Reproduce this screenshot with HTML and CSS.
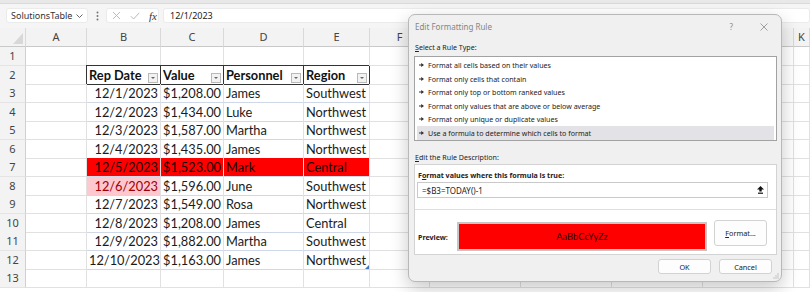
FILE: index.html
```html
<!DOCTYPE html>
<html lang="en">
<head>
  <meta charset="UTF-8">
  <title>Edit Formatting Rule</title>
  <link rel="stylesheet" href="styles.css">
</head>
<body>
  <div class="ribbon-edge"></div>

  <!-- name box + formula bar -->
  <div class="formula-bar">
    <div class="name-box">
      <span>SolutionsTable</span>
      <svg width="7" height="4" viewBox="0 0 7 4"><polyline points="0.5,0.5 3.5,3.5 6.5,0.5" fill="none" stroke="#555" stroke-width="0.9"/></svg>
    </div>
    <svg class="grip" width="3" height="10" viewBox="0 0 3 10"><circle cx="1.5" cy="1.5" r="1" fill="#777"/><circle cx="1.5" cy="5" r="1" fill="#777"/><circle cx="1.5" cy="8.5" r="1" fill="#777"/></svg>
    <div class="fx-box">
      <svg width="9" height="9" viewBox="0 0 9 9"><path d="M1 1L8 8M8 1L1 8" stroke="#b4b4b4" stroke-width="0.9"/></svg>
      <svg width="10" height="8" viewBox="0 0 10 8"><path d="M0.8 4.2L3.6 7L9.2 0.8" fill="none" stroke="#b4b4b4" stroke-width="0.9"/></svg>
      <span class="fx">fx</span>
    </div>
    <div class="formula-input"><span>12/1/2023</span></div>
  </div>

  <!-- worksheet -->
  <div class="sheet">
    <div class="row col-head">
      <div class="corner"></div><div>A</div><div>B</div><div>C</div><div>D</div><div>E</div><div>F</div><div>G</div><div>H</div><div>I</div><div>J</div><div>K</div>
    </div>
    <div class="row"><div class="rh">1</div><div></div><div></div><div></div><div></div><div></div><div></div><div></div><div></div><div></div><div></div><div></div></div>
    <div class="row"><div class="rh">2</div><div></div>
      <div class="th"><span>Rep Date</span><i class="filter"></i></div>
      <div class="th"><span>Value</span><i class="filter"></i></div>
      <div class="th"><span>Personnel</span><i class="filter"></i></div>
      <div class="th"><span>Region</span><i class="filter"></i></div>
      <div></div><div></div><div></div><div></div><div></div><div></div></div>
    <div class="row"><div class="rh">3</div><div></div><div class="td right">12/1/2023</div><div class="td right">$1,208.00</div><div class="td">James</div><div class="td">Southwest</div><div></div><div></div><div></div><div></div><div></div><div></div></div>
    <div class="row"><div class="rh">4</div><div></div><div class="td right">12/2/2023</div><div class="td right">$1,434.00</div><div class="td">Luke</div><div class="td">Northwest</div><div></div><div></div><div></div><div></div><div></div><div></div></div>
    <div class="row"><div class="rh">5</div><div></div><div class="td right">12/3/2023</div><div class="td right">$1,587.00</div><div class="td">Martha</div><div class="td">Northwest</div><div></div><div></div><div></div><div></div><div></div><div></div></div>
    <div class="row"><div class="rh">6</div><div></div><div class="td right">12/4/2023</div><div class="td right">$1,435.00</div><div class="td">James</div><div class="td">Northwest</div><div></div><div></div><div></div><div></div><div></div><div></div></div>
    <div class="row"><div class="rh">7</div><div></div><div class="td right hot">12/5/2023</div><div class="td right hot">$1,523.00</div><div class="td hot">Mark</div><div class="td hot">Central</div><div></div><div></div><div></div><div></div><div></div><div></div></div>
    <div class="row"><div class="rh">8</div><div></div><div class="td right soon">12/6/2023</div><div class="td right">$1,596.00</div><div class="td">June</div><div class="td">Southwest</div><div></div><div></div><div></div><div></div><div></div><div></div></div>
    <div class="row"><div class="rh">9</div><div></div><div class="td right">12/7/2023</div><div class="td right">$1,549.00</div><div class="td">Rosa</div><div class="td">Northwest</div><div></div><div></div><div></div><div></div><div></div><div></div></div>
    <div class="row"><div class="rh">10</div><div></div><div class="td right">12/8/2023</div><div class="td right">$1,208.00</div><div class="td">James</div><div class="td">Central</div><div></div><div></div><div></div><div></div><div></div><div></div></div>
    <div class="row"><div class="rh">11</div><div></div><div class="td right">12/9/2023</div><div class="td right">$1,882.00</div><div class="td">Martha</div><div class="td">Southwest</div><div></div><div></div><div></div><div></div><div></div><div></div></div>
    <div class="row"><div class="rh">12</div><div></div><div class="td right">12/10/2023</div><div class="td right">$1,163.00</div><div class="td">James</div><div class="td table-end">Northwest</div><div></div><div></div><div></div><div></div><div></div><div></div></div>
    <div class="row"><div class="rh">13</div><div></div><div></div><div></div><div></div><div></div><div></div><div></div><div></div><div></div><div></div><div></div></div>
  </div>

  <!-- conditional formatting dialog -->
  <div class="dialog">
    <div class="dialog-title">
      <span>Edit Formatting Rule</span>
      <span class="title-btns">
        <span class="help">?</span>
        <svg width="8" height="8" viewBox="0 0 8 8"><path d="M0.5 0.5L7.5 7.5M7.5 0.5L0.5 7.5" stroke="#8a8a8a" stroke-width="0.8"/></svg>
      </span>
    </div>

    <div class="label"><u>S</u>elect a Rule Type:</div>
    <ul class="rule-list">
      <li><svg class="arrow" width="5" height="4" viewBox="0 0 5 4"><path d="M0 1.6h2.4v0.8H0z M2.2 0L5 2L2.2 4z" fill="#333"/></svg>Format all cells based on their values</li>
      <li><svg class="arrow" width="5" height="4" viewBox="0 0 5 4"><path d="M0 1.6h2.4v0.8H0z M2.2 0L5 2L2.2 4z" fill="#333"/></svg>Format only cells that contain</li>
      <li><svg class="arrow" width="5" height="4" viewBox="0 0 5 4"><path d="M0 1.6h2.4v0.8H0z M2.2 0L5 2L2.2 4z" fill="#333"/></svg>Format only top or bottom ranked values</li>
      <li><svg class="arrow" width="5" height="4" viewBox="0 0 5 4"><path d="M0 1.6h2.4v0.8H0z M2.2 0L5 2L2.2 4z" fill="#333"/></svg>Format only values that are above or below average</li>
      <li><svg class="arrow" width="5" height="4" viewBox="0 0 5 4"><path d="M0 1.6h2.4v0.8H0z M2.2 0L5 2L2.2 4z" fill="#333"/></svg>Format only unique or duplicate values</li>
      <li class="selected"><svg class="arrow" width="5" height="4" viewBox="0 0 5 4"><path d="M0 1.6h2.4v0.8H0z M2.2 0L5 2L2.2 4z" fill="#333"/></svg>Use a formula to determine which cells to format</li>
    </ul>

    <div class="label label-gap"><u>E</u>dit the Rule Description:</div>
    <div class="desc">
      <div class="desc-top">
        <div class="bold">F<u>o</u>rmat values where this formula is true:</div>
        <div class="formula-field">
          <span>=$B3=TODAY()-1</span>
          <span class="collapse">
            <svg width="7" height="8" viewBox="0 0 7 8"><path d="M3.5 0L7 3.4H4.7V5.6H2.3V3.4H0z" fill="#111"/><rect x="1" y="6.6" width="5" height="1.2" fill="#111"/></svg>
          </span>
        </div>
      </div>
      <div class="desc-bottom">
        <span class="bold preview-label">Preview:</span>
        <div class="preview">AaBbCcYyZz</div>
        <button class="btn format-btn"><u>F</u>ormat...</button>
      </div>
    </div>

    <div class="dialog-actions">
      <button class="btn">OK</button>
      <button class="btn">Cancel</button>
    </div>
    <svg class="resize" width="6" height="6" viewBox="0 0 6 6"><g fill="#9a9a9a"><rect x="4.5" y="0.5" width="1" height="1"/><rect x="2.5" y="2.5" width="1" height="1"/><rect x="4.5" y="2.5" width="1" height="1"/><rect x="0.5" y="4.5" width="1" height="1"/><rect x="2.5" y="4.5" width="1" height="1"/><rect x="4.5" y="4.5" width="1" height="1"/></g></svg>
  </div>
</body>
</html>
```

FILE: styles.css
```css
* {
  margin: 0;
  padding: 0;
  box-sizing: border-box;
}

body {
  position: relative;
  width: 810px;
  height: 292px;
  overflow: hidden;
  background: #fff;
  font-family: "Noto Sans", "Liberation Sans", sans-serif;
  color: #222;
}

/* ---------- top bar ---------- */

.ribbon-edge {
  height: 4px;
  background: #e8e8e8;
  border-bottom: 1px solid #dadada;
}

.formula-bar {
  display: flex;
  align-items: center;
  height: 24px;
  padding: 0 0 1px 6px;
  background: #f5f5f5;
}

.name-box {
  display: flex;
  align-items: center;
  justify-content: space-between;
  width: 82px;
  height: 15px;
  padding: 0 4px 0 4px;
  background: #fff;
  border: 1px solid #ebebeb;
  border-radius: 3px;
  font-size: 9px;
  color: #333;
}

.grip {
  margin-left: 8px;
}

.fx-box {
  display: flex;
  align-items: center;
  gap: 9px;
  width: 53px;
  height: 15px;
  margin-left: 7px;
  padding-left: 5px;
  background: #fff;
  border: 1px solid #ebebeb;
  border-radius: 3px;
}

.fx {
  font-family: "Liberation Serif", serif;
  font-style: italic;
  font-size: 11px;
  color: #333;
}

.formula-input {
  flex: 1;
  height: 15px;
  margin-left: 4px;
  padding-left: 6px;
  background: #fff;
  border: 1px solid #ebebeb;
  border-radius: 3px;
  font-size: 9px;
  line-height: 13px;
  color: #222;
}

/* ---------- worksheet ---------- */

.row {
  display: grid;
  grid-template-columns: 26px 61px 74px 63px 80px 66px 60px repeat(4, 91px) 1fr;
  height: 18.5px;
  font-family: "Lato", "Liberation Sans", sans-serif;
  font-size: 12.8px;
  line-height: 18px;
}

.row > div {
  border-right: 1px solid #e1e1e1;
  border-bottom: 1px solid #e1e1e1;
  white-space: nowrap;
}

.col-head {
  height: 19px;
  font-family: "Noto Sans", sans-serif;
  font-size: 11px;
  color: #444;
  text-align: center;
}

.col-head > div {
  background: #f3f3f3;
  border-right-color: #d9d9d9;
  border-bottom-color: #c9c9c9;
}

.corner {
  position: relative;
}

.corner::after {
  content: "";
  position: absolute;
  right: 2px;
  bottom: 2px;
  border-left: 10px solid transparent;
  border-bottom: 11px solid #d8d8d8;
}

.row > .rh {
  background: #f3f3f3;
  border-right-color: #d0d0d0;
  border-bottom-color: #e4e4e4;
  font-family: "Noto Sans", sans-serif;
  font-size: 11px;
  color: #444;
  text-align: center;
}

/* table header */
.row > .th {
  display: flex;
  justify-content: space-between;
  align-items: flex-end;
  padding-left: 2px;
  border-right-color: #333;
  border-bottom-color: #333;
  box-shadow: -1px -1px 0 #333;
  font-weight: 700;
  color: #111;
}

.filter {
  position: relative;
  width: 10px;
  height: 10px;
  margin: 0 2px 1px 0;
  background: #f2f2f2;
  border: 1px solid #b9b9b9;
}

.filter::after {
  content: "";
  position: absolute;
  left: 2px;
  top: 3px;
  border-left: 2px solid transparent;
  border-right: 2px solid transparent;
  border-top: 2px solid #666;
}

/* table body */
.row > .td {
  padding: 0 2px;
  border-bottom-color: #cfd8e8;
  color: #1b1b1b;
}

.right {
  text-align: right;
}

.row > .hot {
  background: #ff0000;
  color: #1a0000;
}

.row > .soon {
  background: #ffc7ce;
  color: #9c0006;
}

.table-end {
  position: relative;
}

.table-end::after {
  content: "";
  position: absolute;
  right: 0;
  bottom: 0;
  border-left: 4px solid transparent;
  border-bottom: 4px solid #4472c4;
}

/* ---------- dialog ---------- */

.dialog {
  position: absolute;
  left: 408px;
  top: 14px;
  width: 374px;
  padding: 0 4px 7px 5px;
  background: #f0f0f0;
  border: 1px solid #b8b8b8;
  border-radius: 7px;
  box-shadow: 0 6px 18px rgba(0, 0, 0, 0.22);
  font-size: 7.1px;
  color: #222;
}

.dialog-title {
  display: flex;
  justify-content: space-between;
  align-items: center;
  height: 22px;
  padding: 1px 9px 0 1px;
  font-size: 8px;
  color: #858585;
}

.title-btns {
  display: flex;
  align-items: center;
  gap: 27px;
}

.help {
  font-size: 8px;
  color: #8a8a8a;
}

.label {
  margin-top: 5px;
  padding-left: 1px;
  line-height: 10px;
}

.label-gap {
  margin-top: 11px;
}

.rule-list {
  list-style: none;
  height: 85px;
  margin-top: 4px;
  padding: 1.5px 2px 0;
  background: #fff;
  border: 1px solid #a2a2a2;
}

.rule-list li {
  display: flex;
  align-items: center;
  gap: 4px;
  height: 13.5px;
  padding-left: 2px;
}

.rule-list .selected {
  background: #e2e2e7;
}

.desc {
  margin-top: 2px;
  background: #fff;
  border: 1px solid #d3d3d3;
}

.bold {
  font-weight: 700;
}

.desc-top {
  height: 45px;
  padding: 5px 8px 0 3px;
  border-bottom: 1px solid #dedede;
}

.desc-top .bold {
  line-height: 10px;
}

.formula-field {
  display: flex;
  justify-content: space-between;
  align-items: center;
  height: 16px;
  margin: 2px 0 0 -1px;
  padding: 0 1px 0 4px;
  border: 1px solid #c9c9c9;
  font-size: 8px;
}

.collapse {
  display: flex;
  align-items: center;
  justify-content: center;
  width: 11px;
  height: 12px;
}

.desc-bottom {
  display: flex;
  align-items: center;
  height: 44px;
  padding: 0 8px 0 3px;
}

.preview-label {
  width: 39px;
  margin-top: 10px;
}

.preview {
  width: 250px;
  height: 29px;
  margin-top: 9px;
  background: #ff0000;
  border: 2px solid #c6c6c6;
  font-family: "Lato", "Liberation Sans", sans-serif;
  font-size: 9.4px;
  line-height: 25px;
  text-align: center;
  color: #2a0000;
}

.btn {
  width: 53px;
  height: 15px;
  background: #fdfdfd;
  border: 1px solid #d2d2d2;
  border-radius: 3px;
  font-family: "Noto Sans", sans-serif;
  font-size: 7.3px;
  color: #222;
}

.format-btn {
  height: 26px;
  margin: 2px 0 0 7px;
}

.dialog-actions {
  display: flex;
  justify-content: flex-end;
  gap: 8px;
  margin-top: 4px;
  padding-right: 5px;
}

.resize {
  position: absolute;
  right: 2px;
  bottom: 2px;
}
```
